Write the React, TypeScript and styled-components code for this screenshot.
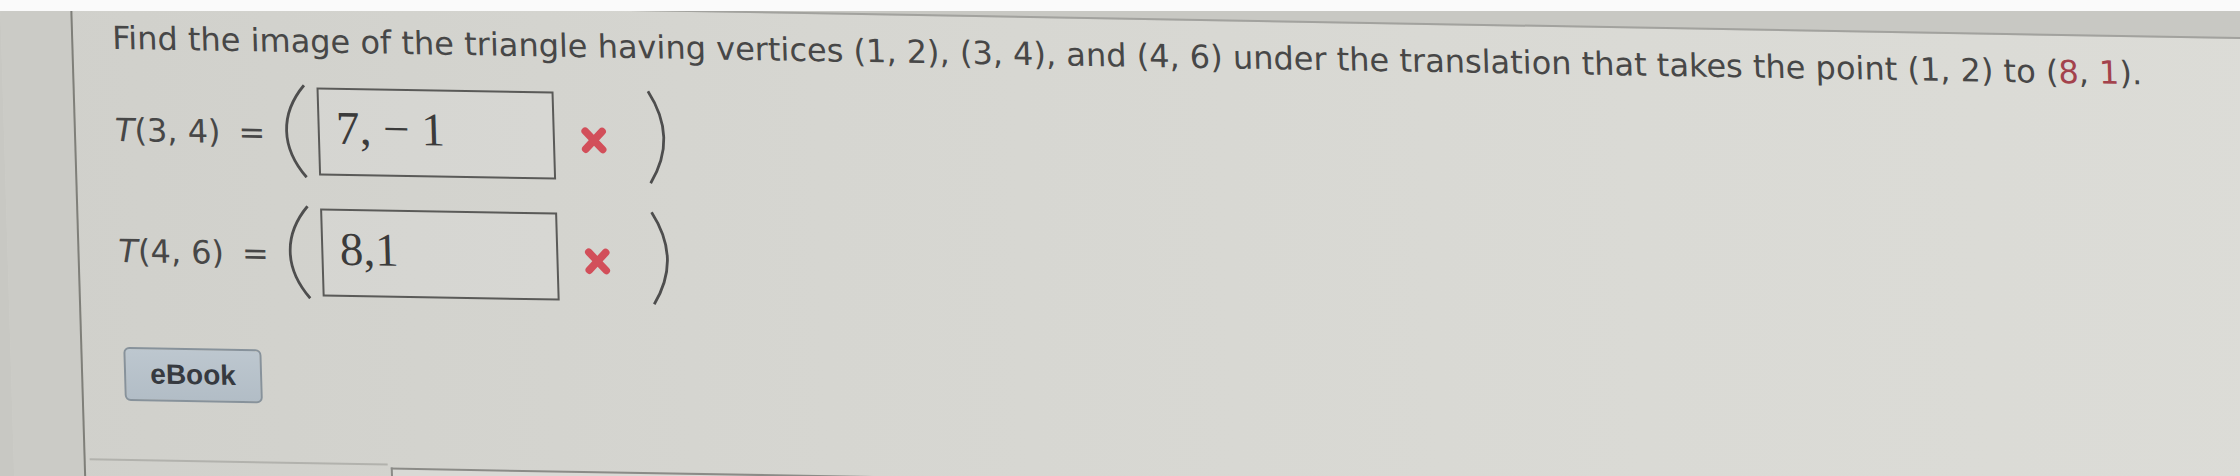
import React from "react";
import styled, { createGlobalStyle } from "styled-components";

const Global = createGlobalStyle`
  html, body { margin: 0; padding: 0; background: #ffffff; }
  body {
    width: 2240px;
    height: 476px;
    overflow: hidden;
    font-family: "DejaVu Sans", Verdana, sans-serif;
  }
`;

const Page = styled.div`
  width: 2240px;
  height: 476px;
  display: flex;
  flex-direction: column;
  background: #ffffff;
  overflow: hidden;
`;

const TopStrip = styled.div`
  flex: none;
  height: 11px;
  background: #fafafa;
  position: relative;
  z-index: 1;
`;

const Viewport = styled.div`
  flex: 1;
  overflow: hidden;
  background: #c8c8c3;
`;

const Sheet = styled.div`
  width: 2330px;
  height: 560px;
  margin-top: -13px;
  display: flex;
  border-top: 2px solid #a2a29e;
  background: linear-gradient(90deg, #d0d0cb 0%, #d6d6d1 35%, #dadad5 70%, #dcdcd7 100%);
  transform: skew(1.7deg, 1deg);
  transform-origin: 0 0;
`;

const Rail = styled.div`
  flex: none;
  width: 70px;
  background: #cbcbc6;
  border-right: 2px solid #7f7f79;
`;

const Main = styled.div`
  flex: 1;
  display: flex;
  flex-direction: column;
`;

const Question = styled.div`
  display: flex;
  flex-direction: column;
  align-items: flex-start;
  padding: 17px 0 0 39px;
`;

const Prompt = styled.p`
  margin: 0;
  font-size: 32px;
  line-height: normal;
  color: #474747;
  white-space: nowrap;
`;

const Red = styled.span`
  color: #a3424c;
`;

const Row = styled.div<{ $gap: number }>`
  display: flex;
  align-items: center;
  height: 96px;
  margin-top: ${(p) => p.$gap}px;
`;

const Label = styled.span`
  padding-top: 4px;
  font-size: 32px;
  line-height: normal;
  color: #474747;
  white-space: nowrap;
`;

const Var = styled.i`
  font-style: italic;
`;

const Equals = styled.span`
  margin-left: 18px;
  padding-top: 4px;
  font-size: 32px;
  line-height: normal;
  color: #474747;
`;

const ParenSvg = styled.svg<{ $gap: number }>`
  flex: none;
  display: block;
  margin-left: ${(p) => p.$gap}px;
`;

const AnswerBox = styled.div`
  flex: none;
  box-sizing: border-box;
  width: 237px;
  height: 88px;
  margin-left: 11px;
  padding: 15px 0 0 16px;
  border: 2px solid #5a5a58;
  background: rgba(222, 222, 218, 0.35);
  font-family: "Liberation Serif", "Times New Roman", serif;
  font-size: 47px;
  line-height: 47px;
  color: #3b3b3b;
  white-space: nowrap;
`;

const Mark = styled.svg`
  flex: none;
  display: block;
  margin-left: 24px;
  margin-top: 8px;
`;

const EBook = styled.button`
  margin: 50px 0 0 2px;
  box-sizing: border-box;
  width: 138px;
  height: 54px;
  padding: 0;
  border: 2px solid #87929b;
  border-radius: 6px;
  background: linear-gradient(180deg, #bdc7cf 0%, #b2bdc6 100%);
  font-family: "Liberation Sans", Arial, sans-serif;
  font-weight: 700;
  font-size: 28px;
  color: #363a40;
  cursor: pointer;
`;

const Footer = styled.div`
  display: flex;
  align-items: flex-start;
  margin-top: 58px;
`;

const Rule = styled.div`
  flex: none;
  width: 298px;
  margin-left: 4px;
  border-top: 2px solid #b2b2ad;
`;

const NextBox = styled.div`
  flex: 1;
  height: 60px;
  margin: 4px 0 0 3px;
  border-top: 2px solid #8b8b87;
  border-left: 2px solid #8b8b87;
  background: #d9d9d5;
`;

const OpenParen = () => (
  <ParenSvg $gap={20} width="22" height="94" viewBox="0 0 22 94">
    <path
      d="M20.5 1 C 6 18, 1.8 33, 1.8 47 C 1.8 61, 6 76, 20.5 93"
      fill="none"
      stroke="#4e4e4e"
      strokeWidth="2.8"
    />
  </ParenSvg>
);

const CloseParen = () => (
  <ParenSvg $gap={39} width="18" height="94" viewBox="0 0 18 94">
    <path
      d="M1.5 1 C 12 18, 16 33, 16 47 C 16 61, 12 76, 1.5 93"
      fill="none"
      stroke="#4e4e4e"
      strokeWidth="2.8"
    />
  </ParenSvg>
);

const WrongMark = () => (
  <Mark width="30" height="32" viewBox="0 0 30 32">
    <g stroke="#d24f5a" strokeWidth="7.5" strokeLinecap="round">
      <line x1="6.5" y1="7" x2="23.5" y2="25" />
      <line x1="23.5" y1="7" x2="6.5" y2="25" />
    </g>
  </Mark>
);

const AnswerRow = ({
  point,
  answer,
  gap,
}: {
  point: string;
  answer: string;
  gap: number;
}) => (
  <Row $gap={gap}>
    <Label>
      <Var>T</Var>({point})
    </Label>
    <Equals>=</Equals>
    <OpenParen />
    <AnswerBox>{answer}</AnswerBox>
    <WrongMark />
    <CloseParen />
  </Row>
);

export default function App() {
  return (
    <>
      <Global />
      <Page>
        <TopStrip />
        <Viewport>
          <Sheet>
            <Rail />
            <Main>
              <Question>
                <Prompt>
                  Find the image of the triangle having vertices (1, 2), (3, 4), and (4, 6) under the
                  translation that takes the point (1, 2) to (<Red>8</Red>, <Red>1</Red>).
                </Prompt>
                <AnswerRow point="3, 4" answer="7, − 1" gap={23} />
                <AnswerRow point="4, 6" answer="8,1" gap={25} />
                <EBook type="button">eBook</EBook>
              </Question>
              <Footer>
                <Rule />
                <NextBox />
              </Footer>
            </Main>
          </Sheet>
        </Viewport>
      </Page>
    </>
  );
}
